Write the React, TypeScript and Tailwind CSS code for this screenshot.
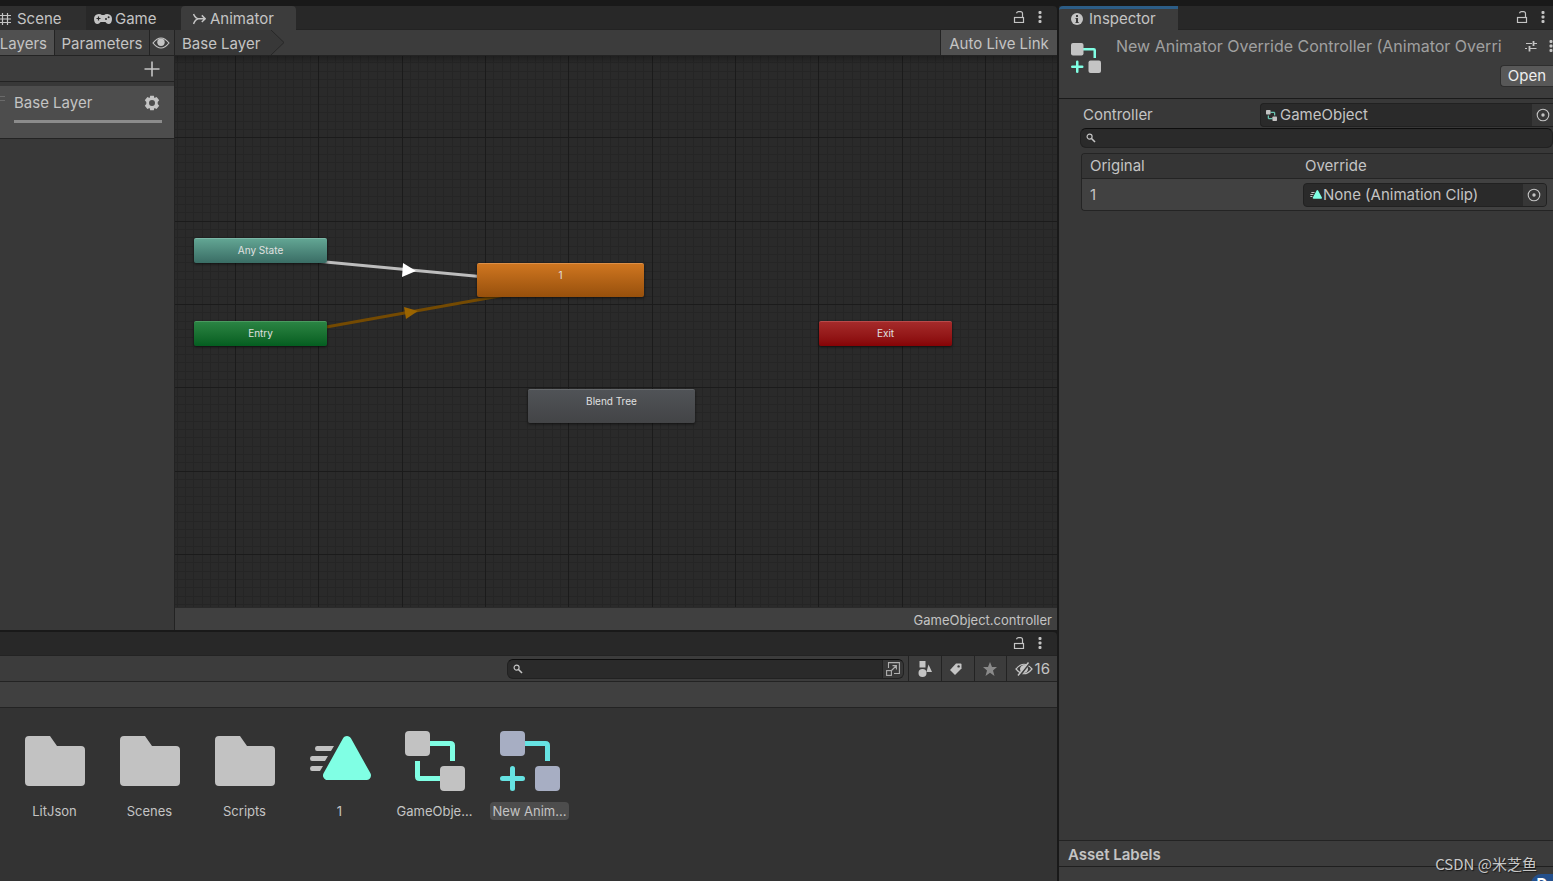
import React from 'react';
import clsx from 'clsx';

interface StateNode {
  name: string;
  cls: string;
}

interface Asset {
  name: string;
  icon: React.ReactNode;
  selected?: boolean;
}

/* ---------- icons ---------- */

const LockIcon = () => (
  <svg className="w-3 h-3" viewBox="0 0 12 12" fill="none" stroke="#c4c4c4" strokeWidth="1.2">
    <rect x="1.5" y="6.5" width="9" height="5" />
    <path d="M9.5 6.500V2.5Q9.5 .7 7.5 .7H5.5Q4 .7 3.5 2.2" />
  </svg>
);

const KebabIcon = () => (
  <svg className="w-1 h-3 shrink-0" viewBox="0 0 4 12" fill="#c4c4c4">
    <rect x=".5" y="0" width="3" height="3" rx="1" />
    <rect x=".5" y="4.5" width="3" height="3" rx="1" />
    <rect x=".5" y="9" width="3" height="3" rx="1" />
  </svg>
);

const SearchIcon = () => (
  <svg className="w-[10px] h-[10px] shrink-0" viewBox="0 0 10 10" fill="none" stroke="#c4c4c4">
    <circle cx="3.6" cy="3.6" r="2.5" strokeWidth="1.2" />
    <path d="M5.5 5.5 9 9" strokeWidth="1.6" />
  </svg>
);

const TargetIcon = () => (
  <svg className="w-[14px] h-[14px]" viewBox="0 0 14 14">
    <circle cx="7" cy="7" r="5.8" fill="none" stroke="#c4c4c4" strokeWidth="1.1" />
    <circle cx="7" cy="7" r="1.7" fill="#c4c4c4" />
  </svg>
);

const SceneIcon = () => (
  <svg className="w-[11px] h-3 shrink-0" viewBox="0 0 11 12" fill="none" stroke="#c4c4c4" strokeWidth="1.2">
    <path d="M0 2.5H11M0 6H11M0 9.5H11M2.5 0V12M7.5 0V12" />
  </svg>
);

const GameIcon = () => (
  <svg className="w-[18px] h-[10px] shrink-0" viewBox="0 0 18 10">
    <path d="M4.8 0Q7 0 7.8 1H10.2Q11 0 13.2 0Q18 .3 18 5Q17.8 10 14.5 10Q12.8 9.8 11.4 8H6.6Q5.2 9.8 3.5 10Q.2 10 0 5Q0 .3 4.8 0Z" fill="#c4c4c4" />
    <path d="M4.5 2.5V6.5M2.5 4.5H6.5" stroke="#282828" strokeWidth="1.2" />
    <circle cx="12" cy="5" r="1" fill="#282828" />
    <circle cx="14.6" cy="3.2" r="1" fill="#282828" />
  </svg>
);

const AnimatorIcon = () => (
  <svg className="w-[13px] h-3 shrink-0" viewBox="0 0 13 12" fill="none" stroke="#c4c4c4" strokeWidth="1.5">
    <path d="M.5 1Q2.5 5.5 5.5 5.7H12M.5 11Q2.5 6 5.5 5.7M8.8 2.4 12.2 5.7 8.8 9" />
  </svg>
);

const EyeIcon = () => (
  <svg className="w-[18px] h-3" viewBox="0 0 18 12">
    <path d="M1 6Q9-4 17 6Q9 16 1 6Z" fill="none" stroke="#c4c4c4" strokeWidth="1.2" />
    <circle cx="9" cy="5.2" r="3.7" fill="#c4c4c4" />
  </svg>
);

const GearIcon = () => (
  <svg className="w-4 h-4" viewBox="0 0 16 16">
    <path
      fill="#c4c4c4"
      fillRule="evenodd"
      d="M6.2.8H9.8L10.4 3 12.6 1.9 15.2 5.3 13.7 7V9L15.2 10.7 12.6 14.1 10.4 13 9.8 15.2H6.2L5.6 13 3.4 14.1.8 10.7 2.3 9V7L.8 5.3 3.4 1.9 5.6 3ZM8 5A3 3 0 1 0 8 11 3 3 0 1 0 8 5Z"
    />
  </svg>
);

const InfoIcon = () => (
  <svg className="w-3 h-3 shrink-0" viewBox="0 0 12 12">
    <circle cx="6" cy="6" r="6" fill="#c4c4c4" />
    <path d="M5 2H7V4H5ZM4.5 5H7V9H7.7V10H4.5V9H5V6H4.5Z" fill="#3c3c3c" />
  </svg>
);

const PresetIcon = () => (
  <svg className="w-3 h-3 shrink-0" viewBox="0 0 12 12" fill="none" stroke="#c4c4c4" strokeWidth="1.2">
    <path d="M1 3.5H7M9 3.5H12M0 8.5H2M5 8.5H11.5" />
    <path d="M8.5 1V6M4.5 6V11.5" strokeWidth="1.8" />
  </svg>
);

const FolderIcon = () => (
  <svg className="w-[60px] h-[60px]" viewBox="0 0 60 60">
    <path d="M4 5H25L32 15H56Q60 15 60 19V51Q60 55 56 55H4Q0 55 0 51V9Q0 5 4 5Z" fill="#c2c2c2" />
  </svg>
);

const ClipIcon = ({ className }: { className: string }) => (
  <svg className={className} viewBox="0 0 62 60">
    <path d="M38 9.5 18.5 44.5H57.5Z" fill="#80ffe4" stroke="#80ffe4" strokeWidth="9" strokeLinejoin="round" />
    <path d="M8 15H25L22 20H8Q6 20 6 17.5T8 15ZM3 25H19L16 30H3Q1 30 1 27.5T3 25ZM3 35H14L11 40H3Q1 40 1 37.5T3 35Z" fill="#c2c2c2" />
  </svg>
);

const ControllerIcon = ({ className }: { className: string }) => (
  <svg className={className} viewBox="0 0 60 60">
    <path d="M24 12.5H45.5Q47.5 12.5 47.5 14.5V30M12.5 30V45.5Q12.5 47.5 14.5 47.5H36" fill="none" stroke="#80ffe4" strokeWidth="5" />
    <rect width="25" height="25" rx="4" fill="#c2c2c2" />
    <rect x="35" y="35" width="25" height="25" rx="4" fill="#c2c2c2" />
  </svg>
);

const OverrideIcon = ({ className, box, line }: { className: string; box: string; line: string }) => (
  <svg className={className} viewBox="0 0 60 60">
    <path d="M24 12.5H45.5Q47.5 12.5 47.5 14.5V30" fill="none" stroke={line} strokeWidth="5" />
    <path d="M12.5 37.5V57.5M2.5 47.5H22.5" stroke={line} strokeWidth="5" strokeLinecap="round" />
    <rect width="25" height="25" rx="4" fill={box} />
    <rect x="35" y="35" width="25" height="25" rx="4" fill={box} />
  </svg>
);

/* ---------- data ---------- */

const nodes: StateNode[] = [
  { name: 'Any State', cls: 'left-[19px] top-[182px] w-[133px] h-[25px] pb-0.5 from-[#62a593] to-[#3a6d65] border-t-[#7cb8a8]' },
  { name: 'Entry', cls: 'left-[19px] top-[265px] w-[133px] h-[25px] pb-0.5 from-[#2a8443] to-[#045e20] border-t-[#4a9a60]' },
  { name: '1', cls: 'left-[302px] top-[207px] w-[167px] h-[34px] pb-3 from-[#cf7620] to-[#97500c] border-t-[#dd9048]' },
  { name: 'Exit', cls: 'left-[644px] top-[265px] w-[133px] h-[25px] pb-0.5 from-[#a52a2a] to-[#860306] border-t-[#b84a4a]' },
  { name: 'Blend Tree', cls: 'left-[353px] top-[333px] w-[167px] h-[34px] pb-3 from-[#505357] to-[#434446] border-t-[#66696c]' },
];

const assets: Asset[] = [
  { name: 'LitJson', icon: <FolderIcon /> },
  { name: 'Scenes', icon: <FolderIcon /> },
  { name: 'Scripts', icon: <FolderIcon /> },
  { name: '1', icon: <ClipIcon className="w-[62px] h-[60px]" /> },
  { name: 'GameObje...', icon: <ControllerIcon className="w-[60px] h-[60px]" /> },
  { name: 'New Anim...', icon: <OverrideIcon className="w-[60px] h-[60px]" box="#a7aec3" line="#66e3e3" />, selected: true },
];

/* ---------- pieces ---------- */

function WindowControls() {
  return (
    <div className="ml-auto flex items-center gap-[13px] pb-px">
      <button aria-label="Lock"><LockIcon /></button>
      <button aria-label="Window menu"><KebabIcon /></button>
    </div>
  );
}

// Ten minor cells to every major one, major lines drawn darker
function GraphGrid() {
  const step = 25 / 3;
  const lines = Array.from({ length: 320 }, (_, i) => i);
  const minor = lines.filter((i) => i % 10 !== 0);
  const major = lines.filter((i) => i % 10 === 0);

  const draw = (i: number) => (
    <React.Fragment key={i}>
      <rect x={Math.round(60 + (i - 10) * step)} width="1" height="100%" />
      <rect y={Math.round(81.4 + (i - 10) * step)} width="100%" height="1" />
    </React.Fragment>
  );

  return (
    <svg className="absolute inset-0 w-full h-full" shapeRendering="crispEdges" aria-hidden="true">
      <g fill="#252525">{minor.map(draw)}</g>
      <g fill="#1b1b1b">{major.map(draw)}</g>
    </svg>
  );
}

function Graph() {
  return (
    <div className="relative flex-1 min-h-0 overflow-hidden bg-[#2a2a2a]">
      <GraphGrid />
      <div className="absolute inset-x-0 top-0 h-2 bg-gradient-to-b from-black/25 to-transparent" />
      {/* Transitions */}
      <svg className="absolute left-0 top-0 w-[800px] h-[400px]" aria-hidden="true">
        <path d="M140 205 310 221" stroke="#bdbdbd" strokeWidth="3" />
        <path d="M228 207 241 215 227 221Z" fill="#fff" />
        <path d="M140 273 330 239" stroke="#744a02" strokeWidth="3" />
        <path d="M229 251 243 255 231 263Z" fill="#9a6400" />
      </svg>
      {nodes.map((node) => (
        <button
          key={node.name}
          className={clsx(
            'absolute flex items-center justify-center rounded-xs border-t bg-gradient-to-b text-[10px] leading-4 text-[#e0e0e0] shadow-[0_1px_3px_rgba(0,0,0,0.6)]',
            node.cls,
          )}
        >
          {node.name}
        </button>
      ))}
    </div>
  );
}

function AnimatorPanel() {
  return (
    <section className="flex-1 min-h-0 flex flex-col">
      <div className="h-6 shrink-0 flex bg-[#282828] rounded-tr">
        <button className="w-[86px] flex items-center gap-1.5 bg-[#2f2f2f] pt-px">
          <SceneIcon />
          Scene
        </button>
        <button className="w-[95px] flex items-center gap-[3px] pl-2 pt-px">
          <GameIcon />
          Game
        </button>
        <button className="w-[115px] flex items-center gap-1 pl-3 pt-px bg-[#3c3c3c] rounded-t">
          <AnimatorIcon />
          Animator
        </button>
        <div className="flex-1 flex pr-[15px] border-b border-[#232323]">
          <WindowControls />
        </div>
      </div>

      <div className="h-[26px] shrink-0 flex bg-[#3c3c3c] border-b border-[#232323]">
        <button className="w-[55px] flex items-center justify-end pr-[7px] pt-0.5 bg-[#505050] border-r border-[#232323]">Layers</button>
        <button className="w-[95px] flex items-center justify-center pt-0.5 border-r border-[#232323]">Parameters</button>
        <button className="w-[25px] flex items-center justify-center pr-0.5 border-r border-[#232323]" aria-label="Hide layers">
          <EyeIcon />
        </button>
        <button className="flex items-center">
          <span className="h-full flex items-center pl-[7px] pr-[11px] pt-0.5 bg-[#383838]">Base Layer</span>
          <svg className="w-[14px] h-[25px]" viewBox="0 0 14 25">
            <path d="M0 0 13 12.5 0 25Z" fill="#383838" />
            <path d="M0 0 13 12.5 0 25" fill="none" stroke="#282828" />
          </svg>
        </button>
        <button className="w-[117px] ml-auto flex items-center justify-center pt-0.5 bg-[#505050] border-l border-[#232323]">
          Auto Live Link
        </button>
      </div>

      <div className="flex-1 min-h-0 flex">
        <aside className="w-[175px] shrink-0 bg-[#383838] border-r border-[#232323]">
          <div className="h-[26px] flex items-center justify-end pr-[14px] bg-[#3c3c3c] border-b border-[#232323]">
            <button aria-label="Add layer">
              <svg className="w-4 h-4" viewBox="0 0 16 16" stroke="#c4c4c4" strokeWidth="1.6">
                <path d="M8 .5V15.5M.5 8H15.5" />
              </svg>
            </button>
          </div>
          <div className="mt-1 h-[53px] flex bg-[#4d4d4d] border-b border-[#232323]">
            <svg className="w-[14px] h-full" viewBox="0 0 14 52" stroke="#6a6a6a">
              <path d="M0 10.5H5M0 14.5H5" />
            </svg>
            <div className="flex-1 pr-3 pt-1.5">
              <div className="flex items-center justify-between">
                Base Layer
                <button className="mr-0.5 pb-px" aria-label="Layer settings"><GearIcon /></button>
              </div>
              <div className="mt-1.5 h-[3px] bg-[#8c8c8c]" />
            </div>
          </div>
        </aside>

        <div className="flex-1 min-w-0 flex flex-col">
          <Graph />
          <div className="h-[23px] shrink-0 flex items-center justify-end pr-[5px] pt-px bg-[#404040] border-t border-[#2a2a2a] text-[13px]">
            GameObject.controller
          </div>
        </div>
      </div>
    </section>
  );
}

function ProjectPanel() {
  return (
    <section className="h-[249px] shrink-0 flex flex-col">
      <div className="h-6 shrink-0 flex pr-[15px] bg-[#282828] border-b border-[#232323] rounded-tr">
        <WindowControls />
      </div>

      <div className="h-[26px] shrink-0 flex items-center justify-end bg-[#3c3c3c] border-b border-[#232323]">
        <label className="w-[397px] h-5 mr-1 flex items-center gap-2 pl-[5px] bg-[#2a2a2a] rounded-md border border-[#212121] border-t-[#0d0d0d] overflow-hidden">
          <SearchIcon />
          <input className="flex-1 min-w-0 outline-none" type="text" aria-label="Search assets" />
          <button className="h-full px-[3px] bg-[#383838] border-l border-[#212121]" aria-label="Search in window">
            <svg className="w-[14px] h-[14px]" viewBox="0 0 14 14" fill="none" stroke="#b0b0b0" strokeWidth="1.1">
              <path d="M2.5 6V.6H13.4V11.5H8M5.5 8.5 10 4M6.5 3.6H10.4V7.5" />
              <rect x=".6" y="8.6" width="4.8" height="4.8" />
            </svg>
          </button>
        </label>
        <button className="w-[33px] h-full flex items-center justify-center border-l border-[#232323]" aria-label="Filter by type">
          <svg className="w-[14px] h-4" viewBox="0 0 14 16" fill="#c4c4c4">
            <rect x="1.5" width="6" height="6.5" />
            <path d="M10.5 3.5 14 11H8.5Z" />
            <circle cx="4.5" cy="12" r="4" />
          </svg>
        </button>
        <button className="w-[33px] h-full flex items-center justify-center pr-1 border-l border-[#232323]" aria-label="Filter by label">
          <svg className="w-3 h-3" viewBox="0 0 12 12">
            <path d="M6 .5H10.5Q11.5 .5 11.5 1.5V5.5L5 12 0 7Z" fill="#c4c4c4" />
            <circle cx="8.6" cy="3.4" r="1.2" fill="#3c3c3c" />
          </svg>
        </button>
        <button className="w-8 h-full flex items-center justify-center pr-0.5 border-l border-[#232323]" aria-label="Favorite">
          <svg className="w-[14px] h-[14px]" viewBox="0 0 14 14">
            <path d="M7 0 9 5H14L10 8.4 11.5 14 7 10.7 2.5 14 4 8.4 0 5H5Z" fill="#8a8a8a" />
          </svg>
        </button>
        <button className="w-[51px] h-full flex items-center justify-end gap-0.5 pr-[7px] pt-px border-l border-[#232323]">
          <svg className="w-[18px] h-[14px] shrink-0" viewBox="0 0 18 14" fill="none" stroke="#c4c4c4">
            <path d="M1 7Q9-2.5 17 7Q9 16.5 1 7Z" strokeWidth="1.2" />
            <circle cx="9" cy="7" r="3.5" fill="#c4c4c4" />
            <path d="M4.5 14 14.5 1" stroke="#3c3c3c" strokeWidth="2" />
            <path d="M3 13.5 13.5 .5" strokeWidth="1.5" />
          </svg>
          16
        </button>
      </div>
      <div className="h-[26px] shrink-0 bg-[#404040] border-b border-[#232323]" />

      <div className="flex-1 min-h-0 flex items-start overflow-hidden bg-[#333] pl-[7px] pt-[23px]">
        {assets.map((asset) => (
          <button key={asset.name} className="w-[95px] flex flex-col items-center gap-[11px] text-[13px] leading-[18px]">
            {asset.icon}
            <span className={clsx('rounded px-[3px] whitespace-nowrap', asset.selected && 'bg-[#4d4d4d]')}>{asset.name}</span>
          </button>
        ))}
      </div>
    </section>
  );
}

function InspectorPanel() {
  return (
    <section className="min-w-0 flex flex-col overflow-hidden bg-[#383838]">
      <div className="h-6 shrink-0 flex bg-[#282828]">
        <button className="w-[119px] flex items-center gap-1.5 pl-3 pb-0.5 bg-[#3c3c3c] border-t-3 border-[#2c5d87] rounded-tl">
          <InfoIcon />
          Inspector
        </button>
        <div className="flex-1 flex pr-2 border-b border-[#232323]">
          <WindowControls />
        </div>
      </div>

      <header className="h-[69px] shrink-0 flex bg-[#3c3c3c] border-b border-[#1a1a1a]">
        <OverrideIcon className="w-[30px] h-[30px] mt-[13px] ml-3 mr-[15px] shrink-0" box="#c4c4c4" line="#80ffe4" />
        <div className="flex-1 min-w-0 flex flex-col">
          <div className="flex items-center gap-3 pt-1">
            <h1 className="flex-1 whitespace-nowrap text-base leading-6 text-[#a0a0a0]">
              New Animator Override Controller (Animator Overri
            </h1>
            <button aria-label="Presets"><PresetIcon /></button>
            <button aria-label="Component menu"><KebabIcon /></button>
          </div>
          <button className="self-end mt-[7px] h-[22px] px-[7px] flex items-center bg-[#585858] text-[#eee] rounded-l border border-r-0 border-[#2e2e2e]">
            Open
          </button>
        </div>
      </header>

      <div className="pt-1">
        <div className="flex items-center pl-6">
          <span id="controller-label" className="w-[177px]">Controller</span>
          <button aria-labelledby="controller-label" className="flex-1 h-6 flex items-center bg-[#2a2a2a] rounded-l border border-r-0 border-[#212121] pl-[5px]">
            <ControllerIcon className="w-[11px] h-[11px] mr-[3px]" />
            GameObject
            <span className="ml-auto h-full flex items-center pl-1 pr-[3px] bg-[#373737]"><TargetIcon /></span>
          </button>
        </div>
        <label className="ml-[21px] mt-px h-5 flex items-center gap-2 pl-[5px] bg-[#2a2a2a] rounded-md border border-[#212121] border-t-[#0d0d0d]">
          <SearchIcon />
          <input className="flex-1 min-w-0 outline-none" type="text" aria-label="Search clips" />
        </label>

        <div className="ml-[22px] mt-[5px] border border-r-0 border-[#242424] rounded-l overflow-hidden">
          <table className="w-full table-fixed text-left">
            <thead>
              <tr className="h-6 bg-[#353535]">
                <th className="w-[221px] pl-2 font-normal">Original</th>
                <th className="pl-0.5 font-normal">Override</th>
              </tr>
            </thead>
            <tbody>
              <tr className="h-8 bg-[#414141] border-t border-[#242424]">
                <td className="pl-2 pt-0.5">1</td>
                <td className="pr-1.5 pt-0.5">
                  <button className="w-full h-6 flex items-center bg-[#2a2a2a] rounded border border-[#212121] pl-1.5 overflow-hidden">
                    <ClipIcon className="w-3 h-3 mr-px" />
                    None (Animation Clip)
                    <span className="ml-auto h-full flex items-center pl-1 pr-[5px] bg-[#373737]"><TargetIcon /></span>
                  </button>
                </td>
              </tr>
            </tbody>
          </table>
        </div>
      </div>

      <div className="mt-auto h-[41px] shrink-0 bg-[#3c3c3c] border-t border-[#232323]">
        <h2 className="h-[26px] flex items-center pl-[9px] pt-0.5 font-semibold border-b border-[#1f1f1f]">Asset Labels</h2>
        <button className="ml-auto mt-[7px] block w-[22px] h-5 rounded-l-full bg-[#24508c] text-white font-bold leading-5" aria-label="Labels">
          D
        </button>
      </div>
    </section>
  );
}

export default function App() {
  return (
    <div className="relative h-screen overflow-hidden grid grid-cols-[minmax(0,1057fr)_minmax(0,494fr)] gap-0.5 pt-1.5 bg-[#191919] font-['Inter','Noto_Sans_CJK_SC',sans-serif] text-[15px] leading-[22px] text-[#c4c4c4]">
      <div className="min-w-0 flex flex-col gap-0.5">
        <AnimatorPanel />
        <ProjectPanel />
      </div>
      <InspectorPanel />
      <div className="absolute right-4 bottom-1.5 font-['Noto_Sans_CJK_SC',sans-serif] text-[15px] leading-[22px] text-[#c8c8c8] [text-shadow:1px_1px_1px_rgba(0,0,0,0.6)]">
        CSDN @米芝鱼
      </div>
    </div>
  );
}
